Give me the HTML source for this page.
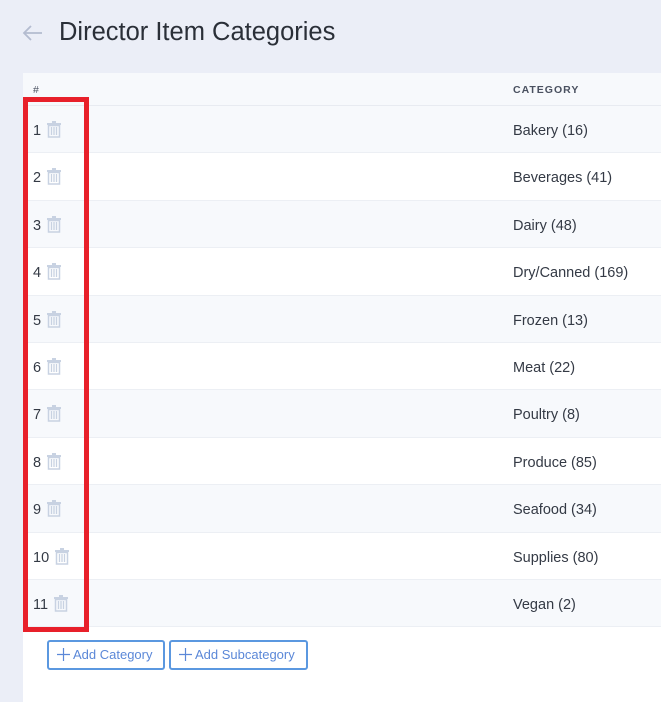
<!DOCTYPE html>
<html><head><style>
body{margin:0;width:661px;height:702px;background:#ebeef7;font-family:"Liberation Sans",sans-serif;position:relative;overflow:hidden;color:#2c3340}
.title{position:absolute;left:59px;top:18px;font-size:25.5px;color:#2a2f38}
.arrow{position:absolute;left:22px;top:24px}
.panel{position:absolute;left:23px;top:73px;width:638px;height:629px;background:#fff}
.hdr{height:32px;background:#f7f9fc;border-bottom:1px solid #e8ebf1;position:relative;font-size:10.5px;letter-spacing:1px;font-weight:bold;color:#4a5160}
.row{height:46.4px;line-height:46px;border-bottom:1px solid #eceff4;position:relative;font-size:14.5px;color:#343a45}
.row:nth-child(odd){background:#f7f9fc}
.num{position:absolute;left:10px;top:2px}
.cat{position:absolute;left:490px;top:2px}
.tr{display:inline-block;vertical-align:-3px;margin-left:5px}
.red{position:absolute;left:23px;top:97px;width:56px;height:525px;border:5px solid #e8202a}
.btn{position:absolute;top:640px;border:2px solid #5b98e0;border-radius:3px;color:#5b88d8;font-size:13px;line-height:26px;padding:0 0 0 8px;box-sizing:border-box;height:30px}
.btn svg{vertical-align:-2px;margin-right:3px}
</style></head><body>
<svg class="arrow" width="22" height="18" viewBox="0 0 22 18"><path d="M20 9H2M9 2L2 9l7 7" stroke="#b4bcd0" stroke-width="1.8" fill="none"/></svg>
<div class="title">Director Item Categories</div>
<div class="panel">
<div class="hdr"><span style="position:absolute;left:10px;top:11px;font-weight:normal">#</span><span style="position:absolute;left:490px;top:11px">CATEGORY</span></div>
<div id="rows"></div>
</div>
<div class="red"></div>
<div class="btn" style="left:47px;width:118px"><svg width="13" height="13"><path d="M6.5 0v13M0 6.5h13" stroke="#5b88d8" stroke-width="1.2"/></svg>Add Category</div>
<div class="btn" style="left:169px;width:139px"><svg width="13" height="13"><path d="M6.5 0v13M0 6.5h13" stroke="#5b88d8" stroke-width="1.2"/></svg>Add Subcategory</div>
<script>
var c=["Bakery (16)","Beverages (41)","Dairy (48)","Dry/Canned (169)","Frozen (13)","Meat (22)","Poultry (8)","Produce (85)","Seafood (34)","Supplies (80)","Vegan (2)"];
var t='<svg class="tr" width="16" height="18" viewBox="0 0 16 18"><path d="M6 1h4v2H6z M1 3h14v2H1z" fill="#c8d2e2"/><path d="M2.5 5.5h11V17h-11z" fill="none" stroke="#c8d2e2" stroke-width="1.5"/><path d="M5.5 7v8M8 7v8M10.5 7v8" stroke="#c8d2e2" stroke-width="1.3"/></svg>';
var h='';c.forEach(function(x,i){h+='<div class="row"><span class="num">'+(i+1)+t+'</span><span class="cat">'+x+'</span></div>'});
document.getElementById('rows').innerHTML=h;
</script>
</body></html>
